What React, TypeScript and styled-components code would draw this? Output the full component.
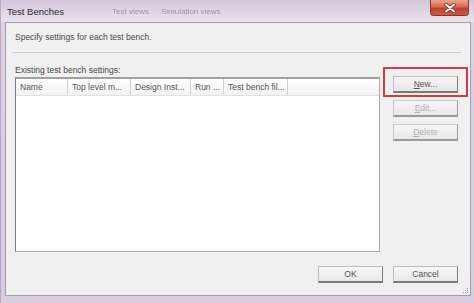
import styled, { createGlobalStyle } from "styled-components";

const GlobalStyle = createGlobalStyle`
  html, body {
    margin: 0;
    padding: 0;
  }
  body {
    font-family: "Liberation Sans", Arial, sans-serif;
    background: #d8cbe0;
  }
`;

const columns = [
  { label: "Name", width: 52 },
  { label: "Top level m...", width: 63 },
  { label: "Design Inst...", width: 60 },
  { label: "Run ...", width: 33 },
  { label: "Test bench fil...", width: 64 },
];

const App: React.FC = () => {
  return (
    <>
      <GlobalStyle />
      <Window>
        <TitleBar>
          <Title>Test Benches</Title>
          <GhostTabs>
            <span>Test views</span>
            <span>Simulation views</span>
          </GhostTabs>
          <CloseButton aria-label="Close">
            <svg width="12" height="10" viewBox="0 0 12 10">
              <path d="M2 1.5 L10 8.5 M10 1.5 L2 8.5" stroke="#6a2418" strokeWidth="3.4" strokeLinecap="round" />
              <path d="M2 1.5 L10 8.5 M10 1.5 L2 8.5" stroke="#ffffff" strokeWidth="2" strokeLinecap="round" />
            </svg>
          </CloseButton>
        </TitleBar>
        <Frame>
          <Client>
            <Intro>Specify settings for each test bench.</Intro>
            <Separator />
            <MainRow>
              <ListColumn>
                <Label>Existing test bench settings:</Label>
                <ListBox>
                  <HeaderRow>
                    {columns.map((c) => (
                      <HeaderCell key={c.label} $width={c.width}>
                        {c.label}
                      </HeaderCell>
                    ))}
                  </HeaderRow>
                </ListBox>
              </ListColumn>
              <ButtonColumn>
                <Highlight />
                <Button>
                  <u>N</u>ew...
                </Button>
                <Button disabled>
                  <u>E</u>dit...
                </Button>
                <Button disabled>
                  <u>D</u>elete
                </Button>
              </ButtonColumn>
            </MainRow>
            <Footer>
              <Button>OK</Button>
              <Button>Cancel</Button>
            </Footer>
            <Grip width="7" height="7" viewBox="0 0 7 7">
              <rect x="5" y="1" width="1" height="1" fill="#9a9a9a" />
              <rect x="3" y="3" width="1" height="1" fill="#9a9a9a" />
              <rect x="5" y="3" width="1" height="1" fill="#9a9a9a" />
              <rect x="1" y="5" width="1" height="1" fill="#9a9a9a" />
              <rect x="3" y="5" width="1" height="1" fill="#9a9a9a" />
              <rect x="5" y="5" width="1" height="1" fill="#9a9a9a" />
            </Grip>
          </Client>
        </Frame>
      </Window>
    </>
  );
};

const Window = styled.div`
  width: 474px;
  height: 303px;
  box-sizing: border-box;
  display: flex;
  flex-direction: column;
  background: linear-gradient(180deg, #cbbad4 0px, #ddd1e4 20px, #d9cce0 100%);
  border-left: 1px solid #b7a8bf;
`;

const TitleBar = styled.div`
  height: 22px;
  flex: none;
  display: flex;
  align-items: flex-start;
  padding-left: 6px;
  position: relative;
  background: linear-gradient(180deg, rgba(255, 255, 255, 0.15), rgba(255, 255, 255, 0.35));
`;

const Title = styled.span`
  font-size: 9.5px;
  line-height: 24px;
  color: #2c2630;
`;

const GhostTabs = styled.div`
  display: flex;
  gap: 12px;
  margin-left: 48px;
  font-size: 8px;
  line-height: 24px;
  color: rgba(70, 60, 80, 0.45);
  filter: blur(0.7px);
`;

const CloseButton = styled.div`
  margin-left: auto;
  margin-right: 5px;
  width: 39px;
  height: 16px;
  box-sizing: border-box;
  border: 1px solid #8b3528;
  border-top: none;
  border-radius: 0 0 4px 4px;
  background: linear-gradient(180deg, #e9a792 0%, #d66a50 45%, #c0402a 55%, #cf5a3c 100%);
  display: flex;
  align-items: center;
  justify-content: center;
`;

const Frame = styled.div`
  flex: 1;
  display: flex;
  padding: 0 4px 7px 4px;
  border-bottom: 1px solid #b5a6bd;
`;

const Client = styled.div`
  flex: 1;
  position: relative;
  display: flex;
  flex-direction: column;
  box-sizing: border-box;
  border: 1px solid #a39cab;
  background: #f0f0f0;
  padding: 7px 12px 12px 9px;
`;

const Intro = styled.div`
  font-size: 8.5px;
  line-height: 14px;
  color: #4a4a4a;
`;

const Separator = styled.div`
  height: 1px;
  margin: 8px -3px 0;
  background: #cbcbcb;
`;

const MainRow = styled.div`
  display: flex;
  gap: 13px;
  margin-top: 11px;
`;

const ListColumn = styled.div`
  width: 365px;
  display: flex;
  flex-direction: column;
  gap: 1px;
`;

const Label = styled.div`
  font-size: 8.5px;
  line-height: 12px;
  color: #4a4a4a;
`;

const ListBox = styled.div`
  height: 175px;
  box-sizing: border-box;
  background: #ffffff;
  border: 1px solid #a8a8a8;
  border-left-color: #7c7c7c;
  border-top: 2px solid #a0a0a0;
`;

const HeaderRow = styled.div`
  display: flex;
  height: 16px;
  background: linear-gradient(180deg, #ffffff, #f2f2f2);
  border-bottom: 1px solid #e2e2e2;
`;

const HeaderCell = styled.div<{ $width: number }>`
  width: ${(p) => p.$width}px;
  box-sizing: border-box;
  padding-left: 4px;
  border-right: 1px solid #d2d2d2;
  font-size: 8.5px;
  line-height: 16px;
  color: #555555;
  white-space: nowrap;
  overflow: hidden;
`;

const ButtonColumn = styled.div`
  position: relative;
  display: flex;
  flex-direction: column;
  gap: 7px;
  padding-top: 12px;
`;

const Highlight = styled.div`
  position: absolute;
  left: -10px;
  top: 3px;
  width: 85px;
  height: 30px;
  box-sizing: border-box;
  border: 2px solid #cf3b4a;
  pointer-events: none;
`;

const Button = styled.button`
  width: 65px;
  height: 17px;
  box-sizing: border-box;
  padding: 0;
  border: 1px solid #bdbdbd;
  border-right-color: #7a7a7a;
  border-bottom: 2px solid #7a7a7a;
  background: linear-gradient(180deg, #f6f6f6, #e8e8e8);
  font-family: "Liberation Sans", Arial, sans-serif;
  font-size: 8.5px;
  color: #555555;

  &:disabled {
    color: #b0b0b0;
    border-color: #cacaca;
    border-right-color: #9a9a9a;
    border-bottom-color: #9a9a9a;
  }

  u {
    text-decoration-thickness: 1px;
  }
`;

const Footer = styled.div`
  display: flex;
  justify-content: flex-end;
  gap: 10px;
  margin-top: 14px;
`;

const Grip = styled.svg`
  position: absolute;
  right: 1px;
  bottom: 1px;
`;

export default App;
